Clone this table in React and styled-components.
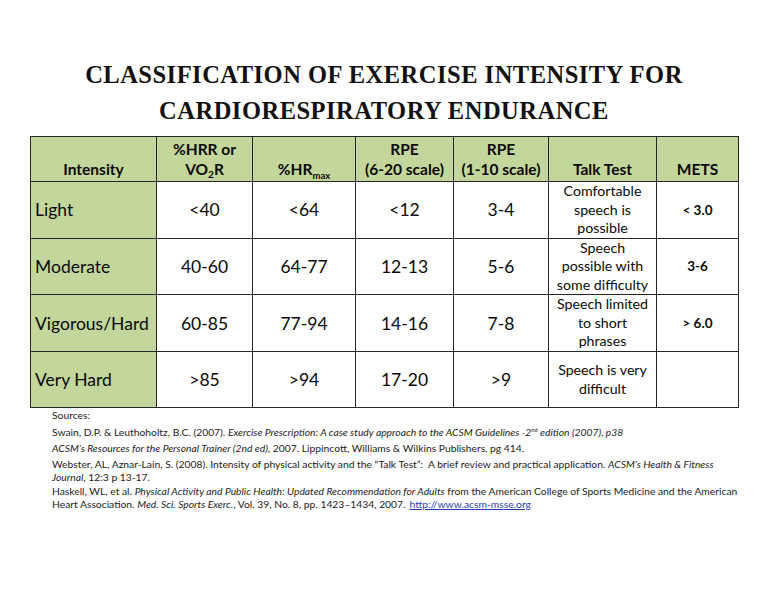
import React from 'react';
import styled, { createGlobalStyle } from 'styled-components';

const GlobalStyle = createGlobalStyle`
  html, body {
    margin: 0;
    padding: 0;
    background: #ffffff;
  }
  body {
    width: 768px;
    height: 594px;
    overflow: hidden;
  }
`;

const Page = styled.div`
  width: 768px;
  height: 594px;
  background: #fff;
  padding-top: 57px;
  box-sizing: border-box;
`;

const Title = styled.h1`
  margin: 0 0 7px;
  font-family: "Liberation Serif", "Times New Roman", serif;
  font-weight: bold;
  font-size: 24.5px;
  line-height: 36px;
  text-align: center;
  color: #111;
  letter-spacing: 0.5px;
`;

const Table = styled.table`
  margin-left: 30px;
  width: 708px;
  border-collapse: collapse;
  table-layout: fixed;
  font-family: Lato, "Open Sans", sans-serif;
  color: #0a0a0a;
`;

const HeadCell = styled.th`
  background: #c3d69b;
  border: 1px solid #262626;
  height: 42px;
  padding: 0 2px 2px;
  font-size: 15.5px;
  font-weight: bold;
  line-height: 20px;
  text-align: center;
  vertical-align: bottom;
`;

const Sub = styled.sub`
  font-size: ${(p) => p.$size}px;
  vertical-align: ${(p) => p.$drop}px;
  line-height: 0;
`;

const Sup = styled.sup`
  font-size: 6px;
  line-height: 0;
  vertical-align: 4px;
`;

const Row = styled.tr`
  height: ${(p) => p.$h}px;
`;

const NameCell = styled.td`
  background: #c3d69b;
  border: 1px solid #262626;
  padding: 0 4px;
  font-size: 17.5px;
  text-align: left;
  white-space: nowrap;
`;

const ValueCell = styled.td`
  border: 1px solid #262626;
  padding: 0 2px;
  font-size: 17.5px;
  text-align: center;
`;

const TalkCell = styled(ValueCell)`
  font-size: 14.2px;
  line-height: 18.5px;
  white-space: nowrap;
`;

const MetsCell = styled(ValueCell)`
  font-size: 13.5px;
  font-weight: bold;
`;

const Sources = styled.div`
  margin: 1px 0 0 52px;
  font-family: Lato, "Open Sans", sans-serif;
  font-size: 10.3px;
  color: #222;
  white-space: nowrap;
`;

const SourceLine = styled.p`
  margin: 0 0 ${(p) => p.$gap}px;
  line-height: 13px;
`;

const Link = styled.a`
  color: #2b3fbf;
  text-decoration: underline;
  margin-left: 4px;
`;

const rows = [
  { name: 'Light', hrr: '<40', hrmax: '<64', rpe20: '<12', rpe10: '3-4', talk: ['Comfortable', 'speech is', 'possible'], mets: '< 3.0', h: 55 },
  { name: 'Moderate', hrr: '40-60', hrmax: '64-77', rpe20: '12-13', rpe10: '5-6', talk: ['Speech', 'possible with', 'some difficulty'], mets: '3-6', h: 56 },
  { name: 'Vigorous/Hard', hrr: '60-85', hrmax: '77-94', rpe20: '14-16', rpe10: '7-8', talk: ['Speech limited', 'to short', 'phrases'], mets: '> 6.0', h: 57 },
  { name: 'Very Hard', hrr: '>85', hrmax: '>94', rpe20: '17-20', rpe10: '>9', talk: ['Speech is very', 'difficult'], mets: '', h: 56 },
];

const widths = [126, 96, 103, 98, 95, 108, 82];

export default function App() {
  return (
    <Page>
      <GlobalStyle />
      <Title>
        CLASSIFICATION OF EXERCISE INTENSITY FOR
        <br />
        CARDIORESPIRATORY ENDURANCE
      </Title>
      <Table>
        <colgroup>
          {widths.map((w, i) => (
            <col key={i} style={{ width: w }} />
          ))}
        </colgroup>
        <thead>
          <tr>
            <HeadCell>Intensity</HeadCell>
            <HeadCell>
              %HRR or
              <br />
              VO<Sub $size={10} $drop={-3}>2</Sub>R
            </HeadCell>
            <HeadCell>
              %HR<Sub $size={9.5} $drop={-4}>max</Sub>
            </HeadCell>
            <HeadCell>
              RPE
              <br />
              (6-20 scale)
            </HeadCell>
            <HeadCell>
              RPE
              <br />
              (1-10 scale)
            </HeadCell>
            <HeadCell>Talk Test</HeadCell>
            <HeadCell>METS</HeadCell>
          </tr>
        </thead>
        <tbody>
          {rows.map((r) => (
            <Row key={r.name} $h={r.h}>
              <NameCell>{r.name}</NameCell>
              <ValueCell>{r.hrr}</ValueCell>
              <ValueCell>{r.hrmax}</ValueCell>
              <ValueCell>{r.rpe20}</ValueCell>
              <ValueCell>{r.rpe10}</ValueCell>
              <TalkCell>
                {r.talk.map((t, i) => (
                  <React.Fragment key={i}>
                    {i > 0 && <br />}
                    {t}
                  </React.Fragment>
                ))}
              </TalkCell>
              <MetsCell>{r.mets}</MetsCell>
            </Row>
          ))}
        </tbody>
      </Table>
      <Sources>
        <SourceLine $gap={4}>Sources:</SourceLine>
        <SourceLine $gap={3}>
          Swain, D.P. &amp; Leuthoholtz, B.C. (2007). <i>Exercise Prescription: A case study approach to the ACSM Guidelines -2<Sup>nd</Sup> edition (2007), p38</i>
        </SourceLine>
        <SourceLine $gap={3}>
          <i>ACSM’s Resources for the Personal Trainer (2nd ed)</i>, 2007. Lippincott, Williams &amp; Wilkins Publishers, pg 414.
        </SourceLine>
        <SourceLine $gap={1}>
          Webster, AL, Aznar-Lain, S. (2008). Intensity of physical activity and the “Talk Test”:&nbsp; A brief review and practical application. <i>ACSM’s Health &amp; Fitness</i>
          <br />
          <i>Journal</i>, 12:3 p 13-17.
        </SourceLine>
        <SourceLine $gap={0}>
          Haskell, WL, et al. <i>Physical Activity and Public Health: Updated Recommendation for Adults</i> from the American College of Sports Medicine and the American
          <br />
          Heart Association. <i>Med. Sci. Sports Exerc.</i>, Vol. 39, No. 8, pp. 1423–1434, 2007.
          <Link href="#">http://www.acsm-msse.org</Link>
        </SourceLine>
      </Sources>
    </Page>
  );
}
